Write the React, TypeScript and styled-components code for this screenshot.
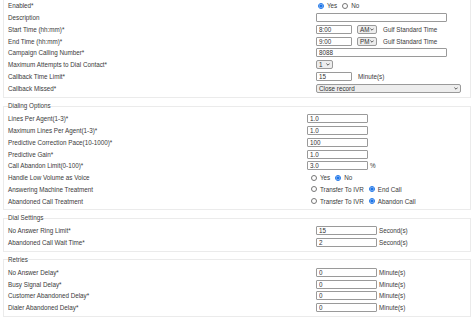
import styled, { createGlobalStyle } from 'styled-components';

const GlobalStyle = createGlobalStyle`
  html, body {
    margin: 0;
    padding: 0;
    background: #fff;
  }
  body {
    font-family: "Liberation Sans", Arial, sans-serif;
    font-size: 6.3px;
    color: #3a3a3a;
  }
`;

const Page = styled.div`
  width: 474px;
  height: 324px;
  overflow: hidden;
`;

const Section = styled.fieldset<{ $first?: boolean }>`
  margin: ${p => (p.$first ? '0' : '2px')} 3px 0;
  padding: ${p => (p.$first ? '0 0 3px' : '1px 0 2px')} 4px;
  border: 1px solid #ebebeb;
  border-top: ${p => (p.$first ? 'none' : '1px solid #ebebeb')};
  min-width: 0;
`;

const Legend = styled.legend`
  padding: 0;
  line-height: 12px;
`;

const Row = styled.div<{ $label: number }>`
  display: grid;
  grid-template-columns: ${p => p.$label}px 1fr;
  align-items: center;
  height: 11.75px;
`;

const Label = styled.span`
  white-space: nowrap;
`;

const Controls = styled.div`
  display: flex;
  align-items: center;
  white-space: nowrap;
`;

const TextInput = styled.input<{ $w: number }>`
  box-sizing: border-box;
  width: ${p => p.$w}px;
  height: 9px;
  margin: 0;
  padding: 0 2px;
  border: 1px solid #9a9a9a;
  border-radius: 1px;
  font: inherit;
  font-size: 6.3px;
  color: #333;
  background: #fff;
  outline: none;
`;

const FakeSelect = styled.span<{ $w: number }>`
  box-sizing: border-box;
  display: inline-flex;
  align-items: center;
  justify-content: space-between;
  width: ${p => p.$w}px;
  height: 9px;
  padding: 0 2px;
  border: 1px solid #9a9a9a;
  border-radius: 2px;
  background: #ededed;
  color: #333;
`;

const Unit = styled.span<{ $gap?: number }>`
  display: inline-flex;
  margin-left: ${p => p.$gap ?? 6}px;
`;

const Radios = styled.div<{ $indent: number }>`
  display: flex;
  align-items: center;
  margin-left: ${p => p.$indent}px;
`;

const RadioOption = styled.label`
  display: inline-flex;
  align-items: center;
  gap: 3px;
  margin-right: 5px;
`;

const Radio = styled.input`
  width: 6px;
  height: 6px;
  margin: 0;
  accent-color: #1a73e8;
`;

const Chevron = () => (
  <svg width="4" height="3" viewBox="0 0 4 3">
    <path d="M0.4 0.6 L2 2.2 L3.6 0.6" fill="none" stroke="#333" strokeWidth="0.8" />
  </svg>
);

const Select = ({ w, value }: { w: number; value: string }) => (
  <FakeSelect $w={w}>
    <span>{value}</span>
    <Chevron />
  </FakeSelect>
);

const RadioGroup = ({ indent, name, options, checked }: { indent: number; name: string; options: string[]; checked: number }) => (
  <Radios $indent={indent}>
    {options.map((o, i) => (
      <RadioOption key={o}>
        <Radio type="radio" name={name} checked={i === checked} readOnly />
        {o}
      </RadioOption>
    ))}
  </Radios>
);

const Field = ({ label, w, children }: { label: string; w: number; children: React.ReactNode }) => (
  <Row $label={w}>
    <Label>{label}</Label>
    <Controls>{children}</Controls>
  </Row>
);

const App = () => (
  <Page>
    <GlobalStyle />
    <Section $first>
      <Field label="Enabled*" w={308}>
        <RadioGroup indent={2} name="enabled" options={['Yes', 'No']} checked={0} />
      </Field>
      <Field label="Description" w={308}>
        <TextInput $w={131} defaultValue="" />
      </Field>
      <Field label="Start Time (hh:mm)*" w={308}>
        <TextInput $w={36} defaultValue="8:00" />
        <Unit $gap={5}><Select w={20} value="AM" /></Unit>
        <Unit>Gulf Standard Time</Unit>
      </Field>
      <Field label="End Time (hh:mm)*" w={308}>
        <TextInput $w={36} defaultValue="9:00" />
        <Unit $gap={5}><Select w={20} value="PM" /></Unit>
        <Unit>Gulf Standard Time</Unit>
      </Field>
      <Field label="Campaign Calling Number*" w={308}>
        <TextInput $w={131} defaultValue="8088" />
      </Field>
      <Field label="Maximum Attempts to Dial Contact*" w={308}>
        <Select w={17} value="1" />
      </Field>
      <Field label="Callback Time Limit*" w={308}>
        <TextInput $w={36} defaultValue="15" />
        <Unit>Minute(s)</Unit>
      </Field>
      <Field label="Callback Missed*" w={308}>
        <Select w={145} value="Close record" />
      </Field>
    </Section>

    <Section>
      <Legend>Dialing Options</Legend>
      <Field label="Lines Per Agent(1-3)*" w={299}>
        <TextInput $w={61} defaultValue="1.0" />
      </Field>
      <Field label="Maximum Lines Per Agent(1-3)*" w={299}>
        <TextInput $w={61} defaultValue="1.0" />
      </Field>
      <Field label="Predictive Correction Pace(10-1000)*" w={299}>
        <TextInput $w={61} defaultValue="100" />
      </Field>
      <Field label="Predictive Gain*" w={299}>
        <TextInput $w={61} defaultValue="1.0" />
      </Field>
      <Field label="Call Abandon Limit(0-100)*" w={299}>
        <TextInput $w={61} defaultValue="3.0" />
        <Unit $gap={2}>%</Unit>
      </Field>
      <Field label="Handle Low Volume as Voice" w={299}>
        <RadioGroup indent={4} name="lowvol" options={['Yes', 'No']} checked={1} />
      </Field>
      <Field label="Answering Machine Treatment" w={299}>
        <RadioGroup indent={4} name="amt" options={['Transfer To IVR', 'End Call']} checked={1} />
      </Field>
      <Field label="Abandoned Call Treatment" w={299}>
        <RadioGroup indent={4} name="act" options={['Transfer To IVR', 'Abandon Call']} checked={1} />
      </Field>
    </Section>

    <Section>
      <Legend>Dial Settings</Legend>
      <Field label="No Answer Ring Limit*" w={308}>
        <TextInput $w={61} defaultValue="15" />
        <Unit $gap={2}>Second(s)</Unit>
      </Field>
      <Field label="Abandoned Call Wait Time*" w={308}>
        <TextInput $w={61} defaultValue="2" />
        <Unit $gap={2}>Second(s)</Unit>
      </Field>
    </Section>

    <Section>
      <Legend>Retries</Legend>
      {['No Answer Delay*', 'Busy Signal Delay*', 'Customer Abandoned Delay*', 'Dialer Abandoned Delay*'].map(l => (
        <Field key={l} label={l} w={308}>
          <TextInput $w={61} defaultValue="0" />
          <Unit $gap={2}>Minute(s)</Unit>
        </Field>
      ))}
    </Section>
  </Page>
);

export default App;
